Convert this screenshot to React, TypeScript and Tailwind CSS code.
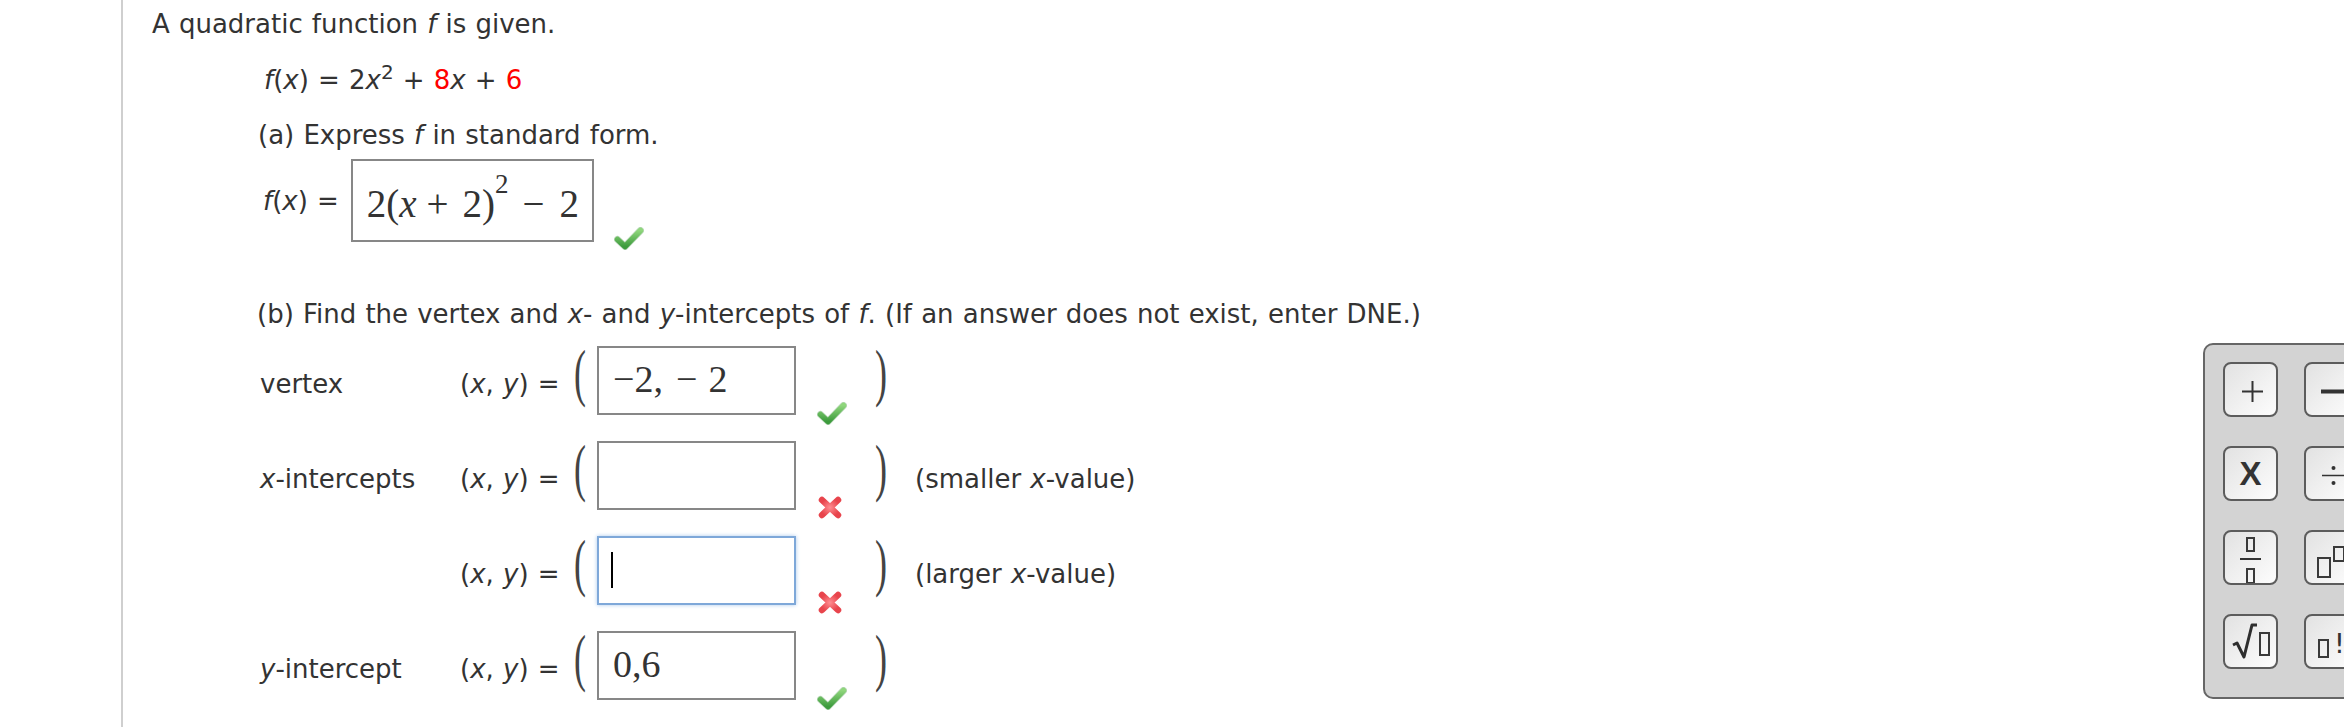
import React from "react";

function Check() {
  return (
    <svg width="30" height="23" viewBox="0 0 30 23">
      <defs>
        <linearGradient id="gck" x1="0" y1="0" x2="0" y2="1">
          <stop offset="0" stopColor="#8fd67c" />
          <stop offset="1" stopColor="#3d9b3d" />
        </linearGradient>
      </defs>
      <path d="M3.5 12.5 L11 19.5 L26.5 3.5" fill="none" stroke="#3f8f3f" strokeWidth="7" strokeLinecap="round" strokeLinejoin="round" opacity="0.35" />
      <path d="M3.5 12.5 L11 19.5 L26.5 3.5" fill="none" stroke="url(#gck)" strokeWidth="5.5" strokeLinecap="round" strokeLinejoin="round" />
    </svg>
  );
}

function Cross() {
  return (
    <svg width="26" height="25" viewBox="0 0 26 25">
      <defs>
        <radialGradient id="gcx" cx="0.5" cy="0.5" r="0.6">
          <stop offset="0" stopColor="#ff8e92" />
          <stop offset="1" stopColor="#e8444c" />
        </radialGradient>
      </defs>
      <path d="M5 5 L21 20 M21 5 L5 20" fill="none" stroke="url(#gcx)" strokeWidth="6.5" strokeLinecap="round" />
    </svg>
  );
}

function LParen() {
  return (
    <span className="inline-block -translate-y-[5px] scale-y-[1.75] font-['Liberation_Serif',serif] text-[36px] leading-none text-[#444]">
      (
    </span>
  );
}

function RParen() {
  return (
    <span className="inline-block -translate-y-[5px] scale-y-[1.75] font-['Liberation_Serif',serif] text-[36px] leading-none text-[#444]">
      )
    </span>
  );
}

type RowProps = {
  label?: React.ReactNode;
  value?: React.ReactNode;
  status: "ok" | "bad";
  note?: React.ReactNode;
  focused?: boolean;
  first?: boolean;
};

function Row({ label, value, status, note, focused, first }: RowProps) {
  return (
    <div className={`${first ? "mt-[17px]" : "mt-[26px]"} flex h-[69px] items-center pl-[108px]`}>
      <div className="w-[200px] pt-[6px] leading-[30px]">{label}</div>
      <div className="w-[114px] pt-[6px] leading-[30px]">
        (<i>x</i>, <i>y</i>) =
      </div>
      <div className="w-[23px]">
        <LParen />
      </div>
      <div
        className={`h-[69px] w-[199px] border-2 bg-white ${
          focused ? "border-[#7ea8d9] shadow-[0_0_4px_#a9c8ec]" : "border-[#878787]"
        }`}
      >
        {focused ? (
          <div className="ml-[12px] mt-[14px] h-[36px] w-[2px] bg-black" />
        ) : (
          <div className="pl-[14px] pt-[12px] font-['Liberation_Serif',serif] text-[38px] leading-none text-[#333] [word-spacing:0px]">
            {value}
          </div>
        )}
      </div>
      <div className="flex w-[79px] self-end pl-[21px]">
        <div className="translate-y-[10px]">{status === "ok" ? <Check /> : <Cross />}</div>
      </div>
      <div className="w-[40px]">
        <RParen />
      </div>
      <div className="pt-[6px] leading-[30px]">{note}</div>
    </div>
  );
}

function Btn({ children }: { children: React.ReactNode }) {
  return (
    <div className="relative flex h-[55px] w-[55px] items-center justify-center overflow-hidden rounded-[8px] border-2 border-[#5c5c5c] bg-linear-to-br from-[#e2e2e2] to-[#fdfdfd]">
      {children}
    </div>
  );
}

function Box({ x, y, w, h }: { x: number; y: number; w: number; h: number }) {
  return <rect x={x} y={y} width={w} height={h} fill="none" stroke="#3a3a3a" strokeWidth="2" />;
}

export default function App() {
  return (
    <div className="flex h-[727px] w-[2344px] overflow-hidden bg-white font-['DejaVu_Sans',Verdana,sans-serif] text-[26px] text-[#333] [word-spacing:0.9px]">
      <div className="w-[121px] shrink-0" />
      <div className="w-[2px] shrink-0 bg-[#cfcfcf]" />
      <div className="flex-1 pl-[29px]">
        <p className="pt-[9px] leading-[30px]">
          A quadratic function <i>f</i> is given.
        </p>
        <p className="mt-[26px] pl-[112px] leading-[30px]">
          <i>f</i>(<i>x</i>) = 2<i>x</i>
          <sup className="text-[20px]">2</sup> + <span className="text-[#ff0000]">8</span>
          <i>x</i> + <span className="text-[#ff0000]">6</span>
        </p>
        <p className="mt-[25px] pl-[106px] leading-[30px]">
          (a) Express <i>f</i> in standard form.
        </p>
        <div className="mt-[9px] flex h-[83px] items-center pl-[111px]">
          <div className="leading-[30px]">
            <i>f</i>(<i>x</i>) =
          </div>
          <div className="ml-[12px] h-[83px] w-[243px] border-2 border-[#878787]">
            <div className="whitespace-nowrap pl-[14px] pt-[10px] font-['Liberation_Serif',serif] text-[39px] leading-none text-[#333] [word-spacing:0px]">
              <span>2(</span>
              <i>x</i>
              <span className="ml-[10px]">+</span>
              <span className="ml-[14px]">2)</span>
              <span className="align-[24px] text-[27px]">2</span>
              <span className="ml-[14px]">−</span>
              <span className="ml-[15px]">2</span>
            </div>
          </div>
          <div className="ml-[20px] self-end">
            <div className="translate-y-[8px]">
              <Check />
            </div>
          </div>
        </div>
        <p className="mt-[57px] pl-[105px] leading-[30px]">
          (b) Find the vertex and <i>x</i>- and <i>y</i>-intercepts of <i>f</i>. (If an answer does not exist,
          enter DNE.)
        </p>
        <Row
          first
          label="vertex"
          status="ok"
          value={
            <span className="whitespace-nowrap">
              −2,<span className="ml-[13px]">−</span>
              <span className="ml-[11px]">2</span>
            </span>
          }
        />
        <Row
          label={
            <>
              <i>x</i>-intercepts
            </>
          }
          status="bad"
          value={null}
          note={
            <>
              (smaller <i>x</i>-value)
            </>
          }
        />
        <Row
          status="bad"
          focused
          note={
            <>
              (larger <i>x</i>-value)
            </>
          }
        />
        <Row
          label={
            <>
              <i>y</i>-intercept
            </>
          }
          status="ok"
          value={<span>0,6</span>}
        />
      </div>
      <div className="w-[141px] shrink-0 overflow-hidden pt-[343px]">
        <div className="h-[356px] w-[182px] rounded-[10px] border-2 border-[#666666] bg-[#d3d3d3] pl-[18px] pt-[17px]">
          <div className="grid grid-cols-[55px_55px] gap-x-[26px] gap-y-[29px]">
            <Btn>
              <svg width="55" height="55" viewBox="0 0 55 55" className="absolute left-0 top-0">
                <path d="M27.5 17 V38 M17 27.5 H38" stroke="#333" strokeWidth="2" />
              </svg>
            </Btn>
            <Btn>
              <svg width="55" height="55" viewBox="0 0 55 55" className="absolute left-0 top-0">
                <path d="M15 27.5 H40" stroke="#333" strokeWidth="4" />
              </svg>
            </Btn>
            <Btn>
              <span className="font-['Liberation_Sans',Arial,sans-serif] text-[33px] font-bold leading-none text-[#333]">X</span>
            </Btn>
            <Btn>
              <svg width="55" height="55" viewBox="0 0 55 55" className="absolute left-0 top-0">
                <path d="M16 27.5 H39" stroke="#333" strokeWidth="1.6" />
                <circle cx="27.5" cy="20" r="2" fill="#333" />
                <circle cx="27.5" cy="35" r="2" fill="#333" />
              </svg>
            </Btn>
            <Btn>
              <svg width="55" height="55" viewBox="0 0 55 55" className="absolute left-0 top-0">
                <Box x={22} y={6} w={7} h={13} />
                <path d="M15 27 H36" stroke="#333" strokeWidth="2" />
                <Box x={22} y={37} w={7} h={14} />
              </svg>
            </Btn>
            <Btn>
              <svg width="55" height="55" viewBox="0 0 55 55" className="absolute left-0 top-0">
                <Box x={12} y={26} w={12} h={19} />
                <Box x={28} y={15} w={10} h={14} />
              </svg>
            </Btn>
            <Btn>
              <svg width="55" height="55" viewBox="0 0 55 55" className="absolute left-0 top-0">
                <path d="M8 29 L12 27 L19 41 L27 9 H32" fill="none" stroke="#2e2e2e" strokeWidth="3" strokeLinejoin="round" />
                <Box x={35} y={17} w={9} h={22} />
              </svg>
            </Btn>
            <Btn>
              <svg width="55" height="55" viewBox="0 0 55 55" className="absolute left-0 top-0">
                <Box x={13} y={24} w={9} h={17} />
              </svg>
              <span className="absolute left-[28px] top-[13px] text-[27px] leading-[30px] text-[#333]">!</span>
            </Btn>
          </div>
        </div>
      </div>
    </div>
  );
}
